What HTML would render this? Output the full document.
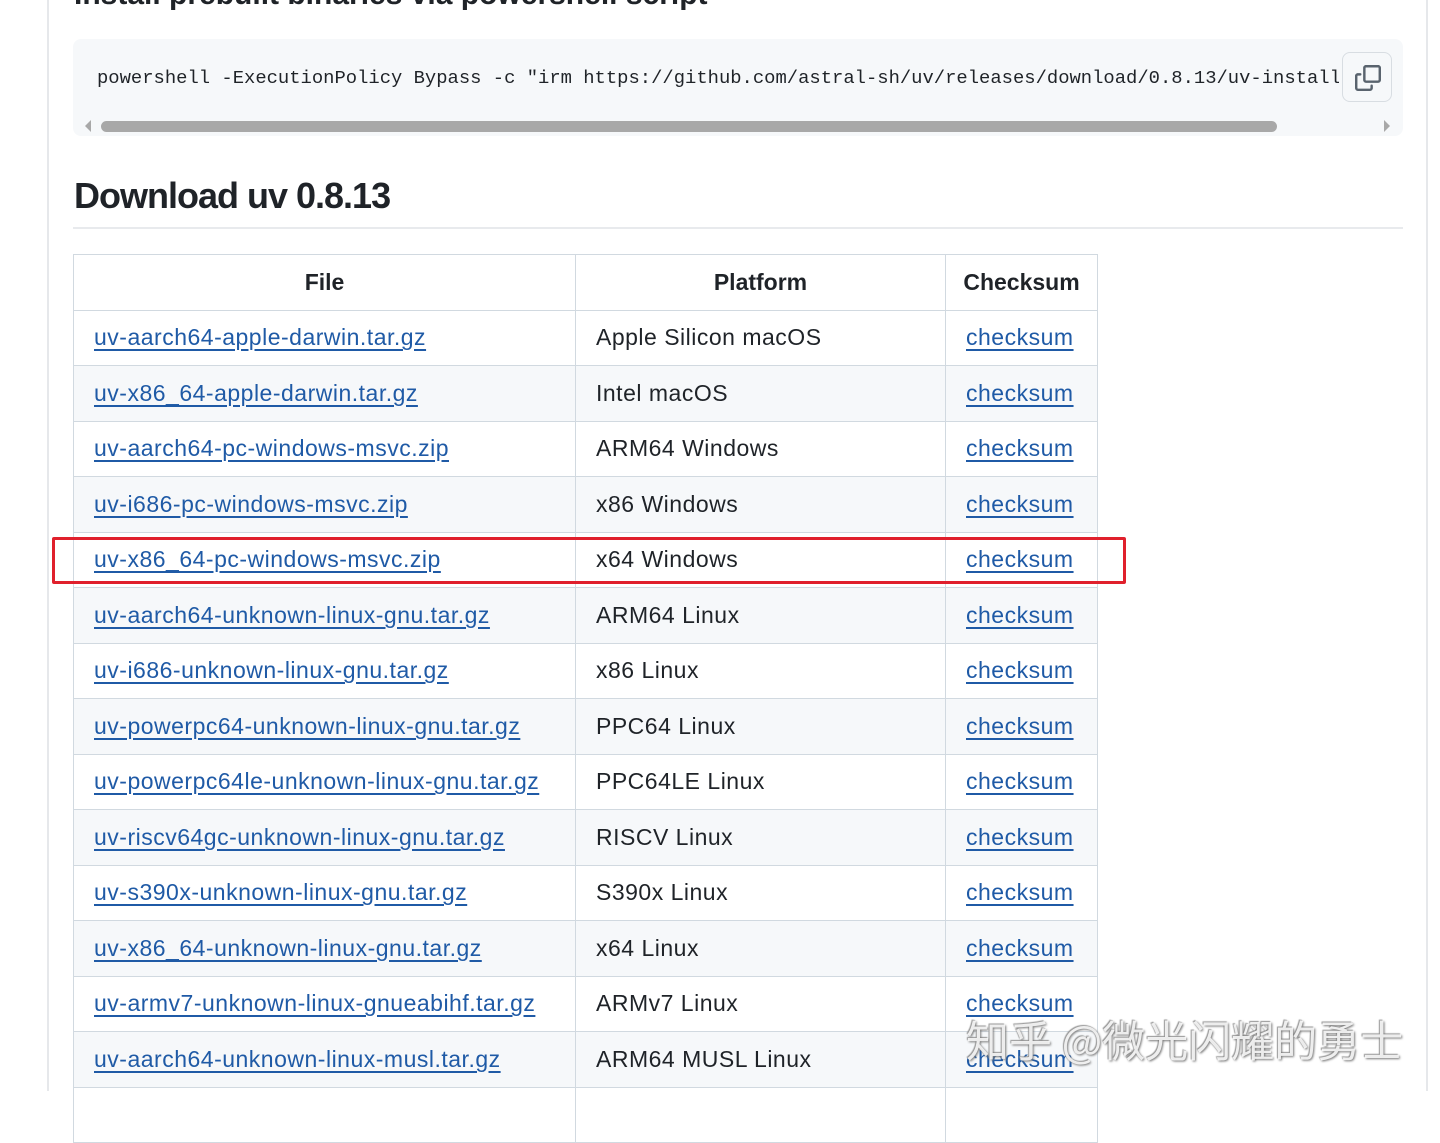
<!DOCTYPE html>
<html><head><meta charset="utf-8"><style>
*{box-sizing:border-box;margin:0;padding:0}
body{width:1440px;height:1091px;overflow:hidden;background:#fff;font-family:"Liberation Sans",sans-serif;color:#1f2328;position:relative}
.lb{position:absolute;left:47px;top:0;width:2px;height:1091px;background:#e6e8eb}
.rb{position:absolute;left:1426px;top:0;width:2px;height:1091px;background:#e6e8eb}
.h0{position:absolute;left:74px;top:-22px;font-size:30px;font-weight:bold;white-space:nowrap}
.code{position:absolute;left:73px;top:39px;width:1330px;height:97px;background:#f6f8fa;border-radius:8px;overflow:hidden}
.code pre{position:absolute;left:24px;top:28px;font-family:"Liberation Mono",monospace;font-size:18.85px;color:#1f2328;white-space:pre}
.copy{position:absolute;left:1342px;top:52px;width:50px;height:50px;border:1px solid #d8dde2;border-radius:8px;background:#f6f8fa}
.sb{position:absolute;left:101px;top:121px;width:1176px;height:11px;background:#a8a8a8;border-radius:6px}
.h2{position:absolute;left:74px;top:175px;font-size:36px;font-weight:bold;letter-spacing:-1px}
.hr{position:absolute;left:73px;top:227px;width:1330px;height:2px;background:#e8eaed}
table{position:absolute;left:73px;top:254px;border-collapse:collapse;font-size:23px;letter-spacing:0.5px;table-layout:fixed;width:1025px}
td,th{border:1px solid #d1d9e0;height:55.5px;padding:0 0 0 20px;white-space:nowrap;overflow:visible}
th{font-weight:bold;text-align:center;padding:0;letter-spacing:0}
tr:nth-child(odd) td{background:#f6f8fa}
a{color:#1f5aa6;text-decoration:underline;text-underline-offset:4px;text-decoration-thickness:1.5px}
.red{position:absolute;left:52px;top:537px;width:1074px;height:47px;border:3.5px solid #e0202c;border-radius:2px}
.wm{position:absolute;left:966px;top:1008px;font-family:"Noto Sans CJK SC",sans-serif;font-size:43px;color:rgba(255,255,255,.85);text-shadow:1px 1px 2px #777,-1px -1px 1px #999;white-space:nowrap}
</style></head><body>
<div class="lb"></div><div class="rb"></div>
<div class="h0">Install prebuilt binaries via powershell script</div>
<div class="code"><pre>powershell -ExecutionPolicy Bypass -c "irm https://github.com/astral-sh/uv/releases/download/0.8.13/uv-install s:</pre>
<div style="position:absolute;left:1266px;top:0;width:56px;height:80px;background:#f6f8fa"></div>
<svg style="position:absolute;left:12px;top:81px" width="8" height="12"><path d="M6 0 L0 6 L6 12Z" fill="#a8a8a8"/></svg>
<svg style="position:absolute;left:1311px;top:81px" width="8" height="12"><path d="M0 0 L6 6 L0 12Z" fill="#a8a8a8"/></svg>
</div>
<div class="copy"><svg style="position:absolute;left:12px;top:12px" width="26" height="26" viewBox="0 0 16 16" fill="#59636e"><path d="M0 6.75C0 5.78.78 5 1.75 5h1.5a.75.75 0 0 1 0 1.5h-1.5a.25.25 0 0 0-.25.25v7.5c0 .14.11.25.25.25h7.5a.25.25 0 0 0 .25-.25v-1.5a.75.75 0 0 1 1.5 0v1.5A1.75 1.75 0 0 1 9.25 16h-7.5A1.75 1.75 0 0 1 0 14.25Z"/><path d="M5 1.75C5 .78 5.78 0 6.75 0h7.5C15.22 0 16 .78 16 1.75v7.5A1.75 1.75 0 0 1 14.25 11h-7.5A1.75 1.75 0 0 1 5 9.25Zm1.75-.25a.25.25 0 0 0-.25.25v7.5c0 .14.11.25.25.25h7.5a.25.25 0 0 0 .25-.25v-7.5a.25.25 0 0 0-.25-.25Z"/></svg></div>
<div class="sb"></div>
<div class="h2">Download uv 0.8.13</div>
<div class="hr"></div>
<table>
<colgroup><col style="width:502px"><col style="width:370px"><col style="width:152px"></colgroup>
<tr><th>File</th><th>Platform</th><th>Checksum</th></tr>
<tr><td><a>uv-aarch64-apple-darwin.tar.gz</a></td><td>Apple Silicon macOS</td><td><a>checksum</a></td></tr>
<tr><td><a>uv-x86_64-apple-darwin.tar.gz</a></td><td>Intel macOS</td><td><a>checksum</a></td></tr>
<tr><td><a>uv-aarch64-pc-windows-msvc.zip</a></td><td>ARM64 Windows</td><td><a>checksum</a></td></tr>
<tr><td><a>uv-i686-pc-windows-msvc.zip</a></td><td>x86 Windows</td><td><a>checksum</a></td></tr>
<tr><td><a>uv-x86_64-pc-windows-msvc.zip</a></td><td>x64 Windows</td><td><a>checksum</a></td></tr>
<tr><td><a>uv-aarch64-unknown-linux-gnu.tar.gz</a></td><td>ARM64 Linux</td><td><a>checksum</a></td></tr>
<tr><td><a>uv-i686-unknown-linux-gnu.tar.gz</a></td><td>x86 Linux</td><td><a>checksum</a></td></tr>
<tr><td><a>uv-powerpc64-unknown-linux-gnu.tar.gz</a></td><td>PPC64 Linux</td><td><a>checksum</a></td></tr>
<tr><td><a>uv-powerpc64le-unknown-linux-gnu.tar.gz</a></td><td>PPC64LE Linux</td><td><a>checksum</a></td></tr>
<tr><td><a>uv-riscv64gc-unknown-linux-gnu.tar.gz</a></td><td>RISCV Linux</td><td><a>checksum</a></td></tr>
<tr><td><a>uv-s390x-unknown-linux-gnu.tar.gz</a></td><td>S390x Linux</td><td><a>checksum</a></td></tr>
<tr><td><a>uv-x86_64-unknown-linux-gnu.tar.gz</a></td><td>x64 Linux</td><td><a>checksum</a></td></tr>
<tr><td><a>uv-armv7-unknown-linux-gnueabihf.tar.gz</a></td><td>ARMv7 Linux</td><td><a>checksum</a></td></tr>
<tr><td><a>uv-aarch64-unknown-linux-musl.tar.gz</a></td><td>ARM64 MUSL Linux</td><td><a>checksum</a></td></tr>
<tr><td>&nbsp;</td><td>&nbsp;</td><td>&nbsp;</td></tr>
</table>
<div class="red"></div>
<div class="wm">知乎 @微光闪耀的勇士</div>
</body></html>
